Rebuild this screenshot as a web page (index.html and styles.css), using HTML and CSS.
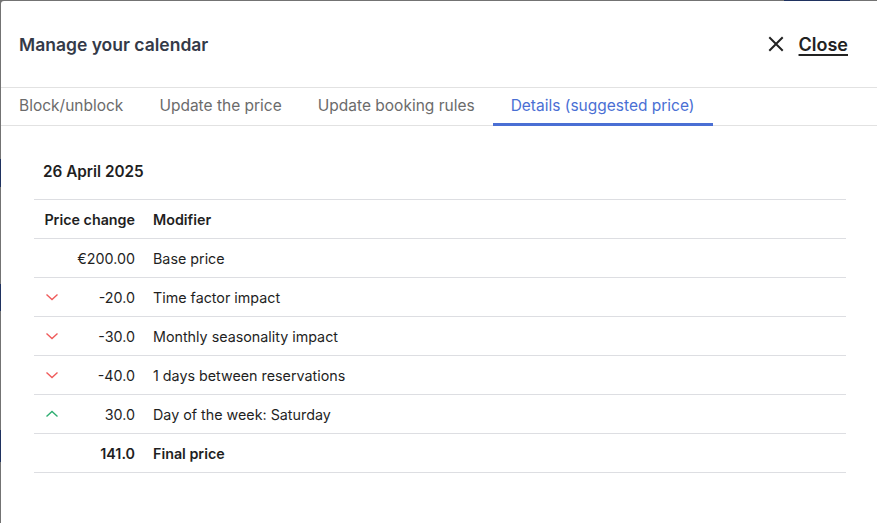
FILE: index.html
```html
<!DOCTYPE html>
<html lang="en">
<head>
<meta charset="utf-8">
<title>Manage your calendar</title>
<link rel="stylesheet" href="styles.css">
</head>
<body>
<div class="modal">
  <header class="modal-header">
    <h1 class="title">Manage your calendar</h1>
    <button class="close" type="button">
      <svg class="close-icon" width="16" height="16" viewBox="0 0 16 16" aria-hidden="true"><path d="M2 2 L14 14 M14 2 L2 14" stroke="#222" stroke-width="2" stroke-linecap="square" fill="none"/></svg>
      <span class="close-text">Close</span>
    </button>
  </header>
  <nav class="tabs">
    <span class="tab">Block/unblock</span>
    <span class="tab">Update the price</span>
    <span class="tab">Update booking rules</span>
    <span class="tab active">Details (suggested price)</span>
  </nav>
  <section class="content">
    <h2 class="date">26 April 2025</h2>
    <table class="details">
      <thead>
        <tr><th class="c1">Price change</th><th class="c2">Modifier</th></tr>
      </thead>
      <tbody>
        <tr><td class="c1"><span class="num">€200.00</span></td><td class="c2">Base price</td></tr>
        <tr><td class="c1"><svg class="chev down" width="14" height="8" viewBox="0 0 14 8"><path d="M1.5 1.5 L7 6.5 L12.5 1.5" fill="none" stroke-width="1.4"/></svg><span class="num">-20.0</span></td><td class="c2">Time factor impact</td></tr>
        <tr><td class="c1"><svg class="chev down" width="14" height="8" viewBox="0 0 14 8"><path d="M1.5 1.5 L7 6.5 L12.5 1.5" fill="none" stroke-width="1.4"/></svg><span class="num">-30.0</span></td><td class="c2">Monthly seasonality impact</td></tr>
        <tr><td class="c1"><svg class="chev down" width="14" height="8" viewBox="0 0 14 8"><path d="M1.5 1.5 L7 6.5 L12.5 1.5" fill="none" stroke-width="1.4"/></svg><span class="num">-40.0</span></td><td class="c2">1 days between reservations</td></tr>
        <tr><td class="c1"><svg class="chev up" width="14" height="8" viewBox="0 0 14 8"><path d="M1.5 6.5 L7 1.5 L12.5 6.5" fill="none" stroke-width="1.4"/></svg><span class="num">30.0</span></td><td class="c2">Day of the week: Saturday</td></tr>
        <tr class="total"><td class="c1"><span class="num">141.0</span></td><td class="c2">Final price</td></tr>
      </tbody>
    </table>
  </section>
</div>
</body>
</html>
```
FILE: styles.css
```css
html, body {
  margin: 0;
  padding: 0;
  height: 100%;
  overflow: hidden;
}
body {
  background-color: #737373;
  background-image:
    linear-gradient(to right, transparent 784px, #1f3260 784px, #1f3260 850px, transparent 850px),
    linear-gradient(to bottom, transparent 159px, #1f3260 159px, #1f3260 187px, transparent 187px, transparent 284px, #1f3260 284px, #1f3260 311px, transparent 311px, transparent 430px, #1f3260 430px, #1f3260 462px, transparent 462px);
  background-size: 100% 1px, 1px 100%;
  background-repeat: no-repeat;
  font-family: Inter, "Noto Sans", sans-serif;
  color: #1f1f1f;
}
.modal {
  margin: 1px 0 0 1px;
  height: 522px;
  background: #fff;
  border-top-left-radius: 3px;
  box-sizing: border-box;
}
.modal-header {
  display: flex;
  align-items: center;
  justify-content: space-between;
  height: 86px;
  padding: 0 29px 0 18px;
  border-bottom: 1px solid #e2e2e2;
}
.title {
  margin: 0;
  font-size: 17.5px;
  font-weight: 600;
  color: #343a48;
}
.close {
  display: flex;
  align-items: center;
  gap: 15px;
  background: none;
  border: 0;
  padding: 0;
  font-family: inherit;
  cursor: pointer;
}
.close-icon {
  display: block;
}
.close-text {
  font-size: 18px;
  font-weight: 600;
  color: #222;
  text-decoration: underline;
  text-underline-offset: 3px;
  text-decoration-thickness: 1.5px;
}
.tabs {
  display: flex;
  height: 38px;
  border-bottom: 1px solid #e2e2e2;
  box-sizing: border-box;
}
.tab {
  display: flex;
  align-items: center;
  padding: 0 18px;
  font-size: 15.5px;
  color: #6b6b6b;
  box-sizing: border-box;
  height: 38px;
  border-bottom: 3px solid transparent;
}
.tab.active {
  color: #4a6fd4;
  border-bottom-color: #4a6fd4;
}
.content {
  padding: 0 31px 0 33px;
}
.date {
  margin: 36px 0 0 9px;
  font-size: 15.3px;
  line-height: 20px;
  font-weight: 600;
  color: #1f1f1f;
}
.details {
  margin-top: 17px;
  width: 100%;
  border-collapse: collapse;
  font-size: 14.3px;
}
.details tr {
  border-top: 1px solid #dddee2;
}
.details tbody tr:last-child {
  border-bottom: 1px solid #dddee2;
}
.details th, .details td {
  height: 38px;
  padding: 0;
  vertical-align: middle;
}
.details th {
  font-weight: 600;
  text-align: left;
}
.details th.c1 {
  text-align: right;
}
.c1 {
  width: 91px;
  white-space: nowrap;
  padding: 0 9px 0 10px !important;
}
.details td.c1 {
  position: relative;
  text-align: right;
}
.c2 {
  padding-left: 9px !important;
  text-align: left;
}
.chev {
  position: absolute;
  left: 11px;
  top: 50%;
  margin-top: -4px;
}
.chev.down path { stroke: #ef5b5b; }
.chev.up path { stroke: #2fae72; }
.total td {
  font-weight: 600;
}
```
